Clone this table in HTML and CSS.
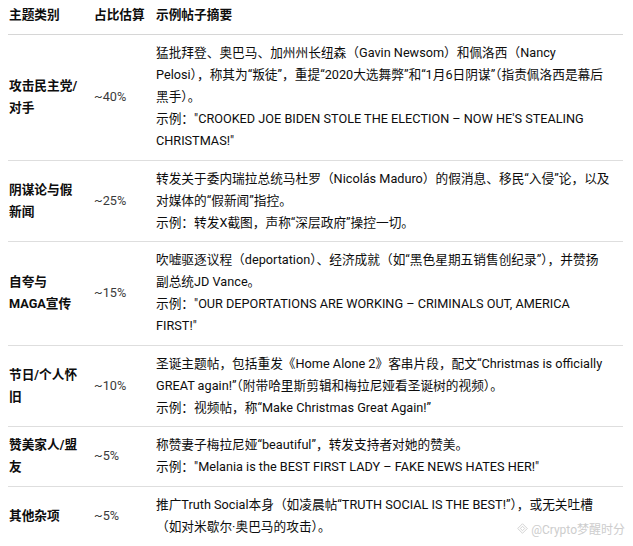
FILE: index.html
```html
<!DOCTYPE html>
<html lang="zh-CN">
<head>
<meta charset="utf-8">
<title>主题类别</title>
<link rel="stylesheet" href="styles.css">
</head>
<body>
<div class="page">
  <table class="topics">
    <colgroup>
      <col class="c-cat">
      <col class="c-pct">
      <col class="c-desc">
    </colgroup>
    <thead>
      <tr><th>主题类别</th><th>占比估算</th><th>示例帖子摘要</th></tr>
    </thead>
    <tbody>
      <tr>
        <td class="cat">攻击民主党/对手</td>
        <td class="pct">~40%</td>
        <td class="desc"><p>猛批拜登、奥巴马、加州州长纽森（Gavin Newsom）和佩洛西（Nancy<br>Pelosi），称其为“叛徒”，重提“2020大选舞弊”和“1月6日阴谋”（指责佩洛西是幕后<br>黑手）。</p><p>示例："CROOKED JOE BIDEN STOLE THE ELECTION – NOW HE'S STEALING<br>CHRISTMAS!"</p></td>
      </tr>
      <tr>
        <td class="cat">阴谋论与假新闻</td>
        <td class="pct">~25%</td>
        <td class="desc"><p>转发关于委内瑞拉总统马杜罗（Nicolás Maduro）的假消息、移民“入侵”论，以及<br>对媒体的“假新闻”指控。</p><p>示例：转发X截图，声称“深层政府”操控一切。</p></td>
      </tr>
      <tr>
        <td class="cat">自夸与<br>MAGA宣传</td>
        <td class="pct">~15%</td>
        <td class="desc"><p>吹嘘驱逐议程（deportation）、经济成就（如“黑色星期五销售创纪录”），并赞扬<br>副总统JD Vance。</p><p>示例："OUR DEPORTATIONS ARE WORKING – CRIMINALS OUT, AMERICA<br>FIRST!"</p></td>
      </tr>
      <tr>
        <td class="cat">节日/个人怀旧</td>
        <td class="pct">~10%</td>
        <td class="desc"><p>圣诞主题帖，包括重发《Home Alone 2》客串片段，配文“Christmas is officially<br>GREAT again!”（附带哈里斯剪辑和梅拉尼娅看圣诞树的视频）。</p><p>示例：视频帖，称“Make Christmas Great Again!”</p></td>
      </tr>
      <tr>
        <td class="cat">赞美家人/盟友</td>
        <td class="pct">~5%</td>
        <td class="desc"><p>称赞妻子梅拉尼娅“beautiful”，转发支持者对她的赞美。</p><p>示例："Melania is the BEST FIRST LADY – FAKE NEWS HATES HER!"</p></td>
      </tr>
      <tr>
        <td class="cat">其他杂项</td>
        <td class="pct">~5%</td>
        <td class="desc"><p>推广Truth Social本身（如凌晨帖“TRUTH SOCIAL IS THE BEST!”），或无关吐槽<br>（如对米歇尔·奥巴马的攻击）。</p></td>
      </tr>
    </tbody>
  </table>
  <div class="watermark">
    <svg class="wm-icon" viewBox="0 0 12 12" width="11" height="11" aria-hidden="true">
      <path d="M6 0.8 L11.2 6 L6 11.2 L0.8 6 Z" fill="none" stroke="#cfcfcf" stroke-width="1"/>
      <path d="M6 3.6 L8.4 6 L6 8.4 L3.6 6 Z" fill="none" stroke="#cfcfcf" stroke-width="1"/>
    </svg>
    <span>@Crypto梦醒时分</span>
  </div>
</div>
</body>
</html>
```
FILE: styles.css
```css
html, body {
  margin: 0;
  padding: 0;
  background: #ffffff;
}

body {
  font-family: Roboto, "Noto Sans CJK SC", sans-serif;
  font-size: 12.7px;
  color: #0d0d0d;
}

.page {
  position: relative;
  padding: 0 10px 0 8px;
  height: 546px;
  overflow: hidden;
}

.topics {
  width: 615px;
  border-collapse: collapse;
  table-layout: fixed;
}

.c-cat { width: 80px; }
.c-pct { width: 62px; }
.c-desc { width: 473px; }

.topics th {
  text-align: left;
  font-weight: 700;
  line-height: 22px;
  padding: 4px 6px 8px;
  border-bottom: 1px solid #d6d6d6;
  white-space: nowrap;
}

.topics td {
  line-height: 22px;
  padding: 7px 6px 7.5px;
  border-bottom: 1px solid #dedede;
  vertical-align: middle;
}

.topics tbody tr:last-child td {
  border-bottom: none;
}

.topics th:first-child,
.topics td.cat {
  padding-left: 1px;
  padding-right: 7px;
}

.topics td.cat {
  font-weight: 700;
}

.topics td.pct {
  color: #3a3a3a;
}

.topics td.desc {
  white-space: nowrap;
}

.desc p {
  margin: 0;
}

.watermark {
  position: absolute;
  right: 8px;
  top: 520px;
  display: flex;
  align-items: center;
  gap: 3px;
  font-size: 12px;
  color: #cdcdcd;
  white-space: nowrap;
}

.wm-icon {
  display: block;
}
```
